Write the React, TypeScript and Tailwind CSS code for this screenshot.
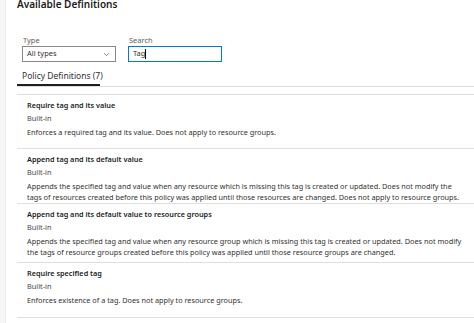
import { ChevronDown } from "lucide-react";

interface Definition {
  title: string;
  lines: string[];
  height: string;
}

const definitions: Definition[] = [
  {
    title: "Require tag and its value",
    lines: ["Enforces a required tag and its value. Does not apply to resource groups."],
    height: "h-[54px]",
  },
  {
    title: "Append tag and its default value",
    lines: [
      "Appends the specified tag and value when any resource which is missing this tag is created or updated. Does not modify the",
      "tags of resources created before this policy was applied until those resources are changed. Does not apply to resource groups.",
    ],
    height: "h-[55px]",
  },
  {
    title: "Append tag and its default value to resource groups",
    lines: [
      "Appends the specified tag and value when any resource group which is missing this tag is created or updated. Does not modify",
      "the tags of resource groups created before this policy was applied until those resource groups are changed.",
    ],
    height: "h-[59px]",
  },
  {
    title: "Require specified tag",
    lines: ["Enforces existence of a tag. Does not apply to resource groups."],
    height: "h-[55px]",
  },
];

export default function App() {
  return (
    <div
      className="flex w-[474px] h-[323px] overflow-hidden bg-white text-[#323130]"
      style={{ fontFamily: '"Noto Sans", "Open Sans", sans-serif' }}
    >
      {/* left blade edge */}
      <div className="w-[6px] shrink-0 bg-[#f6f6f6] border-r border-[#ececec]" />

      <div className="flex-1 flex flex-col pl-[11px]">
        {/* Title */}
        <h1 className="text-[10px] leading-[10px] font-semibold -mt-[1px] text-[#1b1b1b] whitespace-nowrap">
          Available Definitions
        </h1>

        {/* Filters */}
        <div className="flex gap-[12px] pl-[5px] mt-[27px]">
          <div className="flex flex-col">
            <span className="text-[7.5px] leading-[9px] text-[#605e5c] pl-[1px]">Type</span>
            <div className="mt-[1px] w-[94px] h-[16px] border border-[#8a8886] flex items-center justify-between px-[4px]">
              <span className="text-[7.5px] text-[#323130]">All types</span>
              <ChevronDown size={9} strokeWidth={1.5} className="text-[#323130]" />
            </div>
          </div>
          <div className="flex flex-col">
            <span className="text-[7.5px] leading-[9px] text-[#605e5c] pl-[1px]">Search</span>
            <div className="mt-[1px] w-[94px] h-[16px] border border-[#0078d4] flex items-center px-[4px]">
              <span className="text-[7.5px] text-[#323130]">Tag</span>
              <span className="w-px h-[10px] bg-black" />
            </div>
          </div>
        </div>

        {/* Tabs */}
        <div className="flex mt-[8px] border-b border-[#e1dfdd]">
          <div className="flex w-[83px] border-b-2 border-[#201f1e] pl-[5px] pb-[2px]">
            <span className="text-[8.5px] leading-[12px] text-[#323130] whitespace-nowrap">
              Policy Definitions (7)
            </span>
          </div>
        </div>

        {/* List */}
        <div className="mt-[7px] border-t border-[#e1dfdd]">
          {definitions.map((d) => (
            <div
              key={d.title}
              className={`${d.height} border-b border-[#e1dfdd] pl-[10px] pt-[5px]`}
            >
              <div className="text-[7.3px] leading-[11px] font-semibold text-[#201f1e] whitespace-nowrap">
                {d.title}
              </div>
              <div className="mt-[2px] text-[7.3px] leading-[11px] text-[#484644]">Built-in</div>
              <div className="mt-[3px] text-[7.3px] leading-[10.5px] text-[#323130] whitespace-nowrap">
                {d.lines.map((l) => (
                  <div key={l}>{l}</div>
                ))}
              </div>
            </div>
          ))}
        </div>
      </div>
    </div>
  );
}
